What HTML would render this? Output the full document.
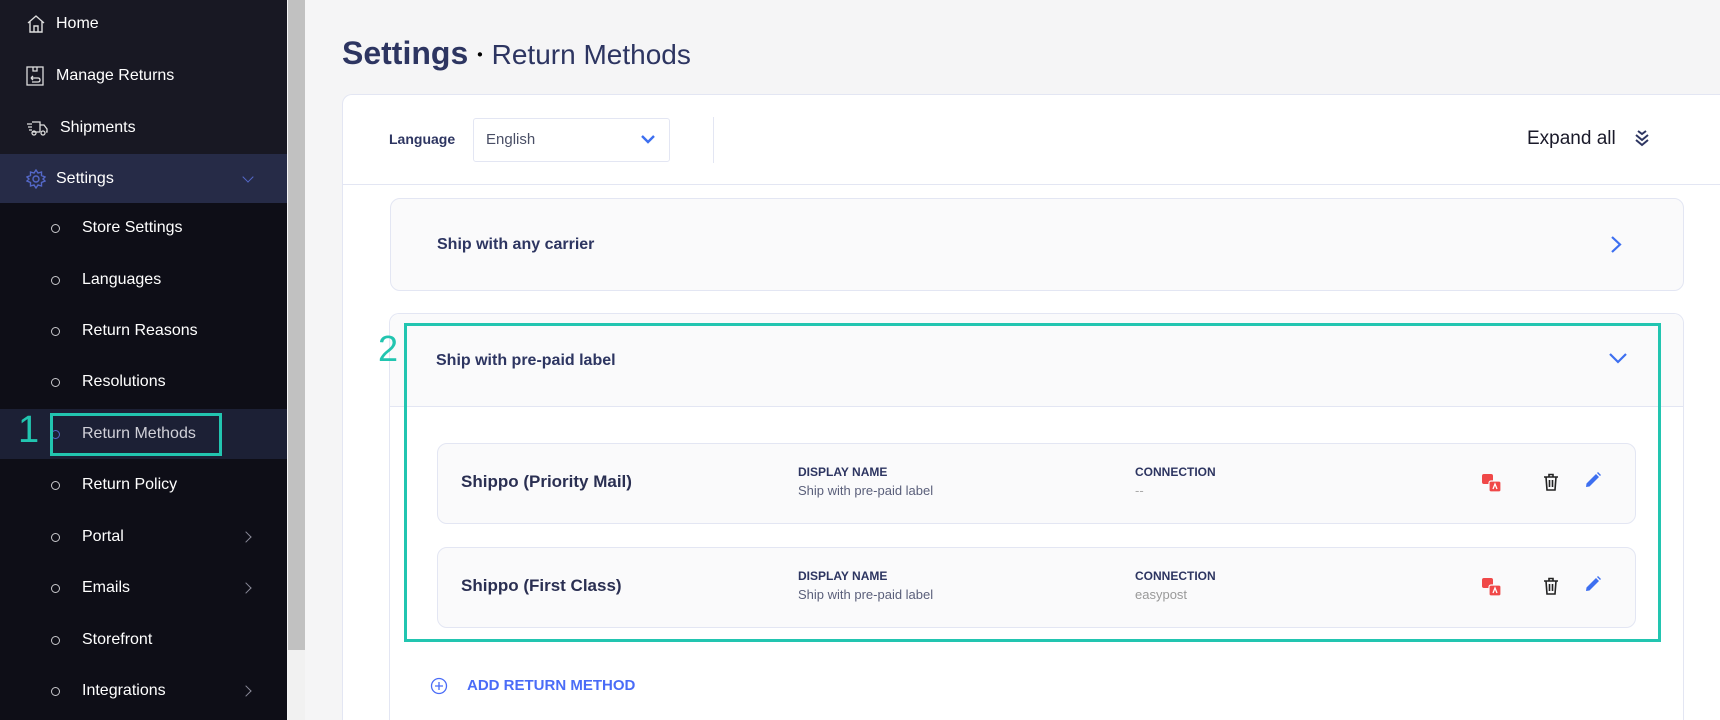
<!DOCTYPE html>
<html><head><meta charset="utf-8"><style>
*{box-sizing:border-box;margin:0;padding:0}
html{width:1720px;height:720px;overflow:hidden}
body{width:1720px;height:720px;overflow:hidden;background:#f5f5f6;font-family:"Liberation Sans",sans-serif;position:relative}
.abs{position:absolute}
#sb{left:0;top:0;width:287px;height:720px;background:#0e0e17}
#sbtop{left:0;top:0;width:287px;height:154px;background:#181823}
.it{position:absolute;color:#fff;font-size:16px;line-height:20px;transform:translateY(-10px)}
.bul{position:absolute;left:51px;width:9px;height:9px;border:1.6px solid #c8c8cc;border-radius:50%;transform:translateY(-4px)}
.chev{position:absolute;left:244px;width:8px;height:8px;border-right:1.5px solid #8a8a99;border-top:1.5px solid #8a8a99;transform:translateY(-4px) rotate(45deg)}
.t{color:#2d3561}
.panel{position:absolute;background:#fafafb;border:1px solid #e3e6f3;border-radius:10px}
.lbl{font-size:12px;font-weight:bold;color:#2d3561;position:absolute}
.val{font-size:13px;color:#5a5f7a;position:absolute}
</style></head><body>
<div id="sb" class="abs"></div>
<div id="sbtop" class="abs"></div>
<div class="abs" style="left:0;top:154px;width:287px;height:49px;background:#262b47"></div>
<div class="abs" style="left:0;top:409px;width:287px;height:50px;background:#1c2035"></div>
<div class="abs" style="left:288px;top:0;width:17px;height:650px;background:#c1c1c1"></div>
<div class="abs" style="left:288px;top:650px;width:17px;height:70px;background:#f1f1f1"></div>

<svg class="abs" style="left:26px;top:14px" width="20" height="20" viewBox="0 0 20 20" fill="none" stroke="#ddd" stroke-width="1.4"><path d="M2 9 L10 2 L18 9 M4 7 V18 H16 V7 M8 18 V12 H12 V18"/></svg>
<div class="it" style="left:56px;top:24px">Home</div>
<svg class="abs" style="left:26px;top:66px" width="18" height="20" viewBox="0 0 18 20" fill="none" stroke="#ddd" stroke-width="1.3"><rect x="1" y="1" width="16" height="18"/><path d="M7 1 V5 H11 V1 M5 12 H12 Q14 12 14 14 Q14 16 12 16 H6 M5 12 L7 10 M5 12 L7 14"/></svg>
<div class="it" style="left:56px;top:76px">Manage Returns</div>
<svg class="abs" style="left:26px;top:119px" width="22" height="18" viewBox="0 0 22 18" fill="none" stroke="#ddd" stroke-width="1.3"><path d="M6 3 H14 V13 M14 6 H18 L21 10 V13 H20 M1 5 H6 M2 8 H6 M3 11 H6 M6 13 H14"/><circle cx="8" cy="14" r="2"/><circle cx="17" cy="14" r="2"/></svg>
<div class="it" style="left:60px;top:128px">Shipments</div>
<svg class="abs" style="left:26px;top:169px" width="20" height="20" viewBox="0 0 20 20" fill="none" stroke="#5468c8" stroke-width="1.4"><path d="M10 1 L12 4 L15.5 3 L15.5 6.5 L19 8 L17 10 L19 12 L15.5 13.5 L15.5 17 L12 16 L10 19 L8 16 L4.5 17 L4.5 13.5 L1 12 L3 10 L1 8 L4.5 6.5 L4.5 3 L8 4 Z"/><circle cx="10" cy="10" r="3"/></svg>
<div class="it" style="left:56px;top:179px">Settings</div>
<div class="chev" style="top:177px;border-color:#5468c8;transform:translateY(-4px) rotate(135deg)"></div>

<div class="bul" style="top:228px"></div><div class="it" style="left:82px;top:228px">Store Settings</div>
<div class="bul" style="top:280px"></div><div class="it" style="left:82px;top:280px">Languages</div>
<div class="bul" style="top:331px"></div><div class="it" style="left:82px;top:331px">Return Reasons</div>
<div class="bul" style="top:382px"></div><div class="it" style="left:82px;top:382px">Resolutions</div>
<div class="bul" style="top:434px;border-color:#5468c8"></div><div class="it" style="left:82px;top:434px;color:#d0d0d8">Return Methods</div>
<div class="bul" style="top:485px"></div><div class="it" style="left:82px;top:485px">Return Policy</div>
<div class="bul" style="top:537px"></div><div class="it" style="left:82px;top:537px">Portal</div><div class="chev" style="top:537px;left:242px"></div>
<div class="bul" style="top:588px"></div><div class="it" style="left:82px;top:588px">Emails</div><div class="chev" style="top:588px;left:242px"></div>
<div class="bul" style="top:640px"></div><div class="it" style="left:82px;top:640px">Storefront</div>
<div class="bul" style="top:691px"></div><div class="it" style="left:82px;top:691px">Integrations</div><div class="chev" style="top:691px;left:242px"></div>
<div class="abs" style="left:50px;top:413px;width:172px;height:43px;border:3px solid #22c5b0"></div>
<div class="abs" style="left:18px;top:410px;font-size:38px;color:#22c5b0;line-height:40px">1</div>

<div class="abs t" style="left:342px;top:33px;font-size:32px;font-weight:bold;line-height:40px">Settings <span style="font-weight:normal;font-size:16px;vertical-align:middle;color:#000">•</span> <span style="font-weight:normal;font-size:28px">Return Methods</span></div>

<div class="abs" style="left:342px;top:94px;width:1378px;height:626px;background:#fff;border:1px solid #e3e6f3;border-right:none;border-bottom:none;border-radius:10px 0 0 0"></div>
<div class="abs" style="left:343px;top:184px;width:1377px;height:1px;background:#e3e6f3"></div>
<div class="abs t" style="left:389px;top:131px;font-size:14px;font-weight:bold">Language</div>
<div class="abs" style="left:473px;top:118px;width:197px;height:44px;border:1px solid #e3e6f3;border-radius:3px"></div>
<div class="abs" style="left:486px;top:131px;font-size:15px;color:#4a4f66">English</div>
<svg class="abs" style="left:641px;top:134px" width="14" height="10" viewBox="0 0 14 10" fill="none" stroke="#3d6ff0" stroke-width="2.4"><path d="M1 2 L7 8 L13 2"/></svg>
<div class="abs" style="left:713px;top:117px;width:1px;height:46px;background:#e3e6f3"></div>
<div class="abs" style="left:1527px;top:128px;font-size:19px;color:#1a1a2a">Expand all</div>
<svg class="abs" style="left:1634px;top:130px" width="16" height="17" viewBox="0 0 16 17" fill="none" stroke="#2d3561" stroke-width="2"><path d="M4 1 L8 4 L12 1 M2 5 L8 10 L14 5 M2 10 L8 15 L14 10"/></svg>

<div class="panel" style="left:390px;top:198px;width:1294px;height:93px"></div>
<div class="abs t" style="left:437px;top:236px;font-size:16px;font-weight:bold">Ship with any carrier</div>
<svg class="abs" style="left:1610px;top:236px" width="12" height="17" viewBox="0 0 12 17" fill="none" stroke="#3d6ff0" stroke-width="2.2"><path d="M2 1 L10 8.5 L2 16"/></svg>

<div class="panel" style="left:389px;top:313px;width:1295px;height:407px;background:#fff;border-bottom:none;border-radius:10px 10px 0 0"></div>
<div class="abs" style="left:390px;top:314px;width:1293px;height:93px;background:#fafafb;border-radius:10px 10px 0 0;border-bottom:1px solid #e3e6f3"></div>
<div class="abs t" style="left:436px;top:352px;font-size:16px;font-weight:bold">Ship with pre-paid label</div>
<svg class="abs" style="left:1609px;top:353px" width="18" height="11" viewBox="0 0 18 11" fill="none" stroke="#3d6ff0" stroke-width="2.2"><path d="M1 1 L9 9 L17 1"/></svg>

<div class="panel" style="left:437px;top:443px;width:1199px;height:81px"></div>
<div class="abs t" style="left:461px;top:472px;font-size:17px;font-weight:bold;color:#2a2f52">Shippo (Priority Mail)</div>
<div class="lbl" style="left:798px;top:465px">DISPLAY NAME</div><div class="val" style="left:798px;top:483px">Ship with pre-paid label</div>
<div class="lbl" style="left:1135px;top:465px">CONNECTION</div><div class="val" style="left:1135px;top:483px;color:#aaa">--</div>

<div class="panel" style="left:437px;top:547px;width:1199px;height:81px"></div>
<div class="abs t" style="left:461px;top:576px;font-size:17px;font-weight:bold;color:#2a2f52">Shippo (First Class)</div>
<div class="lbl" style="left:798px;top:569px">DISPLAY NAME</div><div class="val" style="left:798px;top:587px">Ship with pre-paid label</div>
<div class="lbl" style="left:1135px;top:569px">CONNECTION</div><div class="val" style="left:1135px;top:587px;color:#999">easypost</div>

<svg class="abs" style="left:1482px;top:474px" width="20" height="19" viewBox="0 0 20 19"><rect x="0" y="0" width="11" height="10" rx="2" fill="#f04848"/><rect x="7" y="7" width="12" height="11" rx="2" fill="#f04848" stroke="#fafafb" stroke-width="1.2"/><path d="M11 15 L13 10 L15 15" stroke="#fff" stroke-width="1.3" fill="none"/></svg>
<svg class="abs" style="left:1543px;top:473px" width="16" height="18" viewBox="0 0 16 18" fill="none" stroke="#222" stroke-width="1.6"><path d="M1 4 H15 M6 4 V1.5 H10 V4 M3 4 L4 17 H12 L13 4 M6.5 7 V14 M9.5 7 V14"/></svg>
<svg class="abs" style="left:1585px;top:472px" width="16" height="16" viewBox="0 0 16 16"><path d="M1 15 L1.5 11.5 L11 2 L14 5 L4.5 14.5 Z M12 1 L13 0 L16 3 L15 4 Z" fill="#3d6ff0"/></svg>

<svg class="abs" style="left:1482px;top:578px" width="20" height="19" viewBox="0 0 20 19"><rect x="0" y="0" width="11" height="10" rx="2" fill="#f04848"/><rect x="7" y="7" width="12" height="11" rx="2" fill="#f04848" stroke="#fafafb" stroke-width="1.2"/><path d="M11 15 L13 10 L15 15" stroke="#fff" stroke-width="1.3" fill="none"/></svg>
<svg class="abs" style="left:1543px;top:577px" width="16" height="18" viewBox="0 0 16 18" fill="none" stroke="#222" stroke-width="1.6"><path d="M1 4 H15 M6 4 V1.5 H10 V4 M3 4 L4 17 H12 L13 4 M6.5 7 V14 M9.5 7 V14"/></svg>
<svg class="abs" style="left:1585px;top:576px" width="16" height="16" viewBox="0 0 16 16"><path d="M1 15 L1.5 11.5 L11 2 L14 5 L4.5 14.5 Z M12 1 L13 0 L16 3 L15 4 Z" fill="#3d6ff0"/></svg>

<div class="abs" style="left:404px;top:323px;width:1257px;height:319px;border:3px solid #22c5b0"></div>
<div class="abs" style="left:378px;top:330px;font-size:36px;color:#22c5b0;line-height:38px">2</div>

<svg class="abs" style="left:430px;top:677px" width="18" height="18" viewBox="0 0 18 18" fill="none" stroke="#4a6cf7" stroke-width="1.3"><circle cx="9" cy="9" r="7.5"/><path d="M9 5 V13 M5 9 H13"/></svg>
<div class="abs" style="left:467px;top:677px;font-size:15px;font-weight:bold;color:#4a6cf7">ADD RETURN METHOD</div>
</body></html>
